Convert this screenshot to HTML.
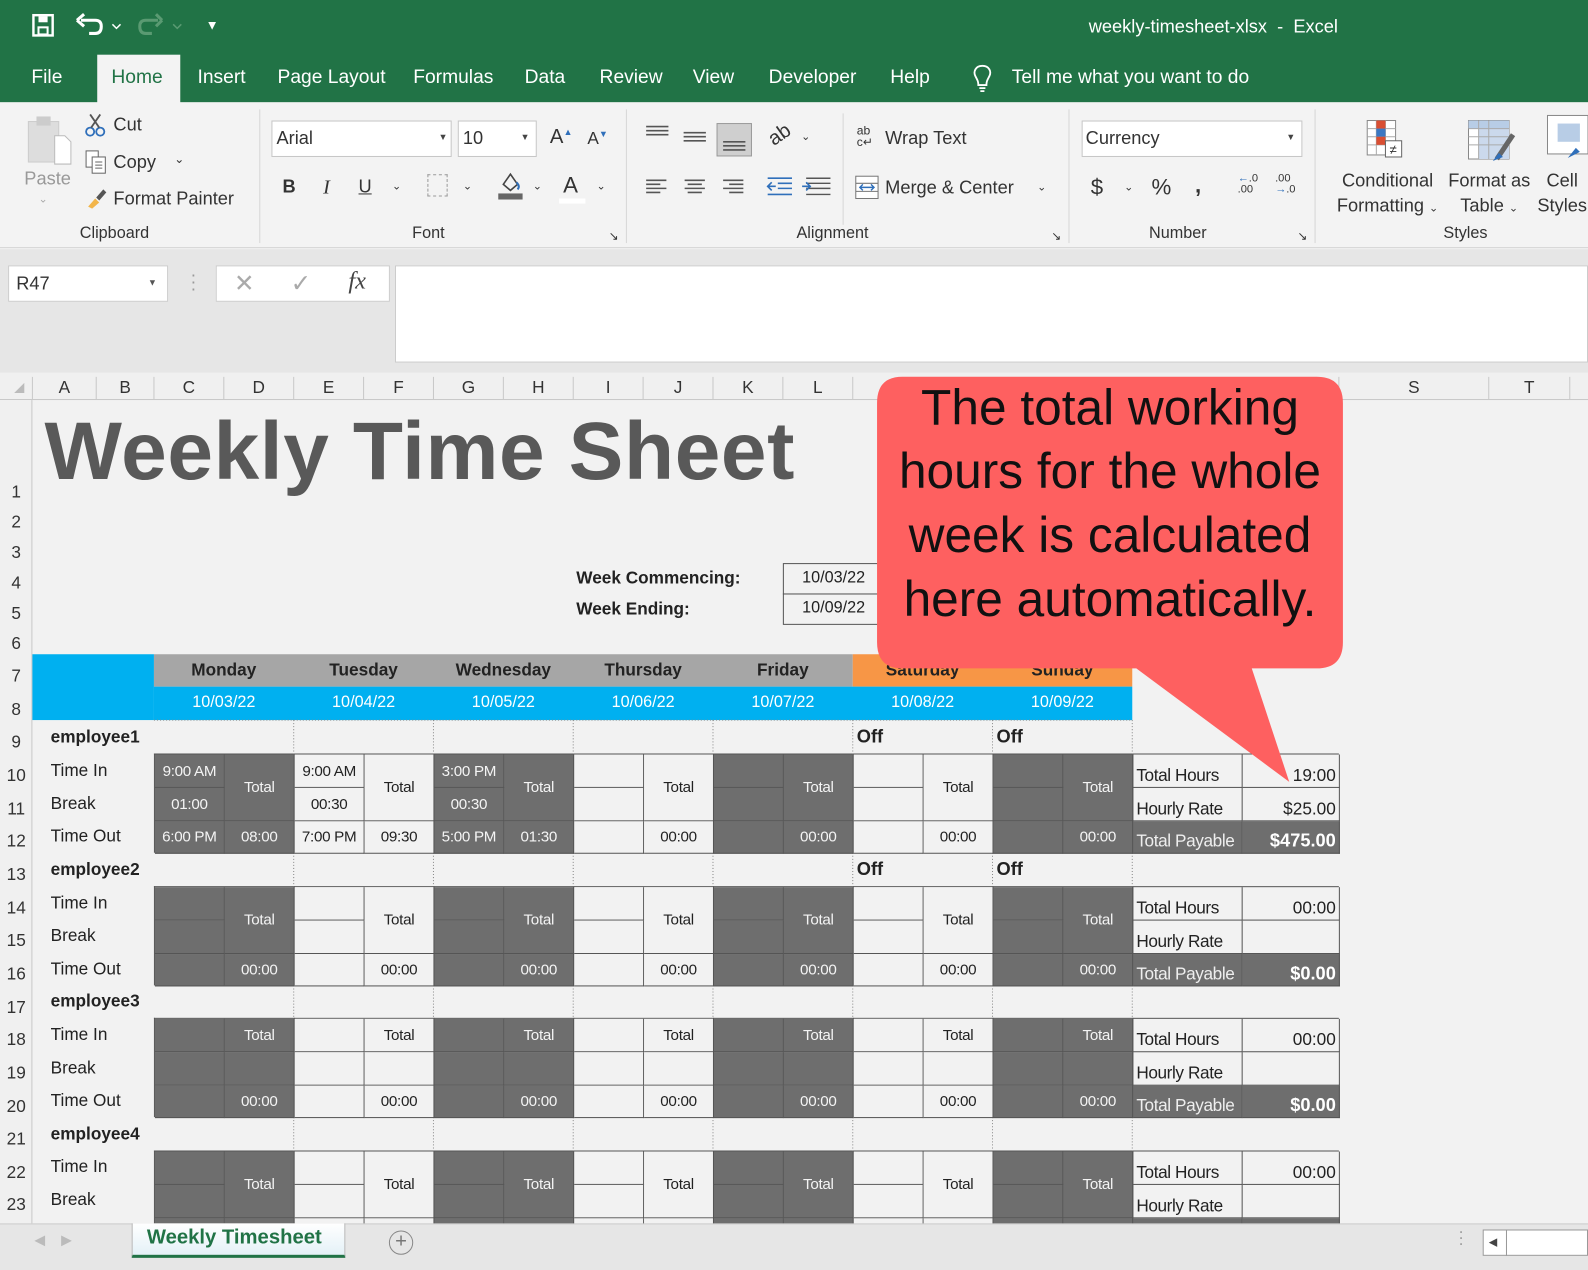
<!DOCTYPE html>
<html><head><meta charset="utf-8">
<style>
*{margin:0;padding:0;box-sizing:border-box}
html,body{width:1588px;height:1270px;overflow:hidden;background:#f2f2f2}
#w{position:absolute;left:0;top:0;width:1568px;height:1254px;transform:scale(1.01276);transform-origin:0 0;font-family:"Liberation Sans",sans-serif;color:#222;background:#f2f2f2;overflow:hidden}
.a{position:absolute;white-space:nowrap}
.day{position:absolute;width:138px;height:98px;border-left:1px solid #555;border-top:1px solid #555;font-size:15px;letter-spacing:-.3px}
.day div{position:absolute;border-right:1px solid #555;border-bottom:1px solid #555;display:flex;align-items:center;justify-content:center;white-space:nowrap}
.D div{background:#6e6e6e;color:#f4f4f4}
.L div{background:#f2f2f2;color:#222}
.a1{left:0;top:0;width:69px;height:33px}
.a2{left:0;top:33px;width:69px;height:33px}
.a3{left:0;top:66px;width:69px;height:32px}
.bT{left:69px;top:0;width:69px;height:66px}
.b1{left:69px;top:0;width:69px;height:33px}
.b2{left:69px;top:33px;width:69px;height:33px}
.b3{left:69px;top:66px;width:69px;height:32px}
.sum{position:absolute;left:1118px;width:204px;height:98px;border-left:1px solid #555;border-top:1px solid #555;font-size:17px}
.sum div{position:absolute;border-right:1px solid #555;border-bottom:1px solid #555;display:flex;align-items:flex-end;padding:0 3px 1px;white-space:nowrap;overflow:hidden}
.q{left:0;width:108px;letter-spacing:-.4px}.r{left:108px;width:96px;justify-content:flex-end}
.r1{top:0;height:33px}.r2{top:33px;height:33px}.r3{top:66px;height:32px;background:#6e6e6e;color:#eee}
.rn{position:absolute;left:0;width:32px;text-align:center;font-size:17px;color:#333}
.ch{position:absolute;top:373px;font-size:17px;color:#333;text-align:center}
.lbl{position:absolute;left:50px;font-size:17px}
.emp{position:absolute;left:50px;font-size:17px;font-weight:bold}
.rib{position:absolute;font-size:18px;color:#333;white-space:nowrap}
.gl{position:absolute;top:222px;font-size:16px;color:#333;transform:translateX(-50%)}
.sep{position:absolute;top:108px;height:132px;border-left:1px solid #d6d6d6}
</style></head><body><div id="w">
<div class="a" style="left:0;top:0;width:1568px;height:101px;background:#217346"></div>
<svg class="a" style="left:30px;top:12px" width="26" height="26" viewBox="0 0 26 26"><rect x="3" y="3" width="19" height="20" fill="none" stroke="#fff" stroke-width="2.4"/><rect x="8" y="4" width="9" height="6" fill="#fff"/><rect x="8" y="15" width="9" height="7" fill="none" stroke="#fff" stroke-width="2"/></svg>
<svg class="a" style="left:74px;top:12px" width="50" height="26" viewBox="0 0 50 26"><path d="M6 8 L20 8 Q26 8 26 14 Q26 21 20 21 L14 21" fill="none" stroke="#fff" stroke-width="3"/><path d="M2 8 L9 2 M2 8 L9 14" stroke="#fff" stroke-width="3" fill="none"/><path d="M37 12 l4 4 l4-4" fill="none" stroke="#fff" stroke-width="1.5"/></svg>
<svg class="a" style="left:134px;top:12px" width="50" height="26" viewBox="0 0 50 26"><path d="M22 8 L10 8 Q4 8 4 14 Q4 21 10 21 L16 21 M26 8 l-6-6 M26 8 l-6 6" fill="none" stroke="#5a9a72" stroke-width="3"/><path d="M37 12 l4 4 l4-4" fill="none" stroke="#5a9a72" stroke-width="1.5"/></svg>
<div class="a" style="left:203px;top:17px;color:#fff;font-size:13px">&#9660;</div>
<div class="a" style="left:1075px;top:16px;color:#fff;font-size:18px">weekly-timesheet-xlsx&nbsp; - &nbsp;Excel</div>
<div class="a" style="left:96px;top:54px;width:82px;height:48px;background:#f3f3f3"></div>
<div class="a" style="top:66px;left:0;font-size:19px;color:#fff;width:1568px;height:30px">
<span class="a" style="left:31px">File</span><span class="a" style="left:110px;color:#217346">Home</span><span class="a" style="left:195px">Insert</span><span class="a" style="left:274px">Page Layout</span><span class="a" style="left:408px">Formulas</span><span class="a" style="left:518px">Data</span><span class="a" style="left:592px">Review</span><span class="a" style="left:684px">View</span><span class="a" style="left:759px">Developer</span><span class="a" style="left:879px">Help</span><span class="a" style="left:999px">Tell me what you want to do</span></div>
<svg class="a" style="left:958px;top:63px" width="24" height="30" viewBox="0 0 24 30"><path d="M12 2 C5 2 3 8 5 12 C7 16 8 17 8 21 L16 21 C16 17 17 16 19 12 C21 8 19 2 12 2Z M9 24 L15 24 M10 27 L14 27" fill="none" stroke="#fff" stroke-width="1.8"/></svg>
<div class="a" style="left:0;top:101px;width:1568px;height:144px;background:#f3f3f3;border-bottom:1px solid #d5d5d5"></div>
<svg class="a" style="left:24px;top:112px" width="48" height="52" viewBox="0 0 48 52"><rect x="4" y="8" width="30" height="40" fill="#ddd" stroke="#ccc"/><rect x="12" y="3" width="14" height="9" fill="#ccc"/><path d="M30 22 L40 22 L46 28 L46 50 L30 50Z" fill="#fff" stroke="#bbb"/></svg>
<div class="rib" style="left:24px;top:166px;color:#999">Paste</div>
<div class="rib" style="left:38px;top:190px;color:#aaa;font-size:11px">&#8964;</div>
<svg class="a" style="left:83px;top:111px" width="22" height="24" viewBox="0 0 22 24"><circle cx="6" cy="19" r="4" fill="none" stroke="#2f6fba" stroke-width="1.8"/><circle cx="16" cy="19" r="4" fill="none" stroke="#2f6fba" stroke-width="1.8"/><path d="M7 15 L16 2 M15 15 L6 2" stroke="#555" stroke-width="1.8"/></svg>
<div class="rib" style="left:112px;top:113px">Cut</div>
<svg class="a" style="left:83px;top:147px" width="24" height="26" viewBox="0 0 24 26"><rect x="2" y="2" width="12" height="16" fill="#fff" stroke="#666"/><rect x="8" y="8" width="13" height="16" fill="#fff" stroke="#666"/><path d="M11 13h7M11 16h7M11 19h7" stroke="#666"/></svg>
<div class="rib" style="left:112px;top:150px">Copy</div>
<div class="rib" style="left:172px;top:150px;font-size:12px">&#8964;</div>
<svg class="a" style="left:84px;top:184px" width="24" height="24" viewBox="0 0 24 24"><path d="M3 20 L10 12 L14 16 L7 22Z" fill="#f2b54a"/><path d="M11 11 L18 3 L21 6 L14 14Z" fill="#555"/></svg>
<div class="rib" style="left:112px;top:186px">Format Painter</div>
<div class="gl" style="left:113px">Clipboard</div>
<div class="sep" style="left:256px"></div>
<div class="a" style="left:268px;top:119px;width:178px;height:36px;background:#fff;border:1px solid #c6c6c6"></div>
<div class="rib" style="left:273px;top:126px">Arial</div><div class="a" style="left:433px;top:130px;font-size:9px;color:#444">&#9660;</div>
<div class="a" style="left:452px;top:119px;width:78px;height:36px;background:#fff;border:1px solid #c6c6c6"></div>
<div class="rib" style="left:457px;top:126px">10</div><div class="a" style="left:514px;top:130px;font-size:9px;color:#444">&#9660;</div>
<div class="rib" style="left:543px;top:124px;font-size:20px">A<sup style="font-size:9px;color:#2f6fba">&#9650;</sup></div>
<div class="rib" style="left:580px;top:127px;font-size:17px">A<sup style="font-size:9px;color:#2f6fba">&#9660;</sup></div>
<div class="rib" style="left:279px;top:174px;font-weight:bold">B</div>
<div class="rib" style="left:319px;top:174px;font-style:italic;font-family:'Liberation Serif',serif;font-size:20px">I</div>
<div class="rib" style="left:354px;top:174px;text-decoration:underline">U</div>
<div class="rib" style="left:387px;top:177px;font-size:11px">&#8964;</div>
<div class="a" style="left:422px;top:172px;width:20px;height:22px;border:1px dashed #999"></div>
<div class="rib" style="left:457px;top:177px;font-size:11px">&#8964;</div>
<svg class="a" style="left:491px;top:168px" width="26" height="30" viewBox="0 0 26 30"><path d="M6 14 L13 4 L20 14 L13 20Z" fill="none" stroke="#444" stroke-width="1.6"/><path d="M19 12 q4 4 1 7" stroke="#2f6fba" stroke-width="2" fill="none"/><rect x="1" y="23" width="24" height="6" fill="#666"/></svg>
<div class="rib" style="left:526px;top:177px;font-size:11px">&#8964;</div>
<div class="rib" style="left:556px;top:170px;font-size:22px">A</div><div class="a" style="left:552px;top:196px;width:26px;height:5px;background:#fff"></div>
<div class="rib" style="left:589px;top:177px;font-size:11px">&#8964;</div>
<div class="gl" style="left:423px">Font</div>
<div class="gl" style="left:606px;font-size:12px;top:226px">&#8600;</div>
<div class="sep" style="left:618px"></div>
<svg class="a" style="left:636px;top:120px" width="110" height="36" viewBox="0 0 110 36"><path d="M2 5h22M2 9h22M2 13h22M39 11h22M39 15h22M39 19h22" stroke="#555" stroke-width="1.6"/><rect x="72" y="2" width="34" height="32" fill="#cfcfcf" stroke="#999"/><path d="M78 20h22M78 24h22M78 28h22" stroke="#555" stroke-width="1.6"/></svg>
<div class="rib" style="left:759px;top:122px;font-size:20px;transform:rotate(-35deg)">ab</div><div class="rib" style="left:791px;top:128px;font-size:11px">&#8964;</div>
<svg class="a" style="left:636px;top:172px" width="190" height="26" viewBox="0 0 190 26"><path d="M2 6h20M2 10h14M2 14h20M2 18h14M40 6h20M43 10h14M40 14h20M43 18h14M78 6h20M84 10h14M78 14h20M84 18h14" stroke="#555" stroke-width="1.6"/><path d="M122 4h24M132 9h14M132 14h14M122 20h24M130 12l-8-0M126 8l-4 4l4 4" stroke="#2f6fba" stroke-width="1.6" fill="none"/><path d="M160 4h24M160 9h24M160 14h24M160 20h24" stroke="#555" stroke-width="1.4"/><path d="M156 12h8M160 8l4 4l-4 4" stroke="#2f6fba" stroke-width="1.6" fill="none"/></svg>
<div class="sep" style="left:832px;height:110px;top:112px"></div>
<div class="rib" style="left:846px;top:124px;font-size:12px;line-height:11px">ab<br>c&#8629;</div>
<div class="rib" style="left:874px;top:126px">Wrap Text</div>
<svg class="a" style="left:844px;top:172px" width="24" height="26" viewBox="0 0 24 26"><rect x="1" y="2" width="22" height="22" fill="#fff" stroke="#777"/><path d="M1 9h22M1 17h22" stroke="#777"/><path d="M5 13h14M8 10l-3 3l3 3M16 10l3 3l-3 3" stroke="#2f6fba" stroke-width="1.4" fill="none"/></svg>
<div class="rib" style="left:874px;top:175px">Merge &amp; Center</div><div class="rib" style="left:1024px;top:178px;font-size:11px">&#8964;</div>
<div class="gl" style="left:822px">Alignment</div>
<div class="gl" style="left:1043px;font-size:12px;top:226px">&#8600;</div>
<div class="sep" style="left:1055px"></div>
<div class="a" style="left:1068px;top:119px;width:218px;height:36px;background:#fff;border:1px solid #c6c6c6"></div>
<div class="rib" style="left:1072px;top:126px">Currency</div><div class="a" style="left:1270px;top:130px;font-size:9px;color:#444">&#9660;</div>
<div class="rib" style="left:1077px;top:172px;font-size:22px">$</div><div class="rib" style="left:1110px;top:178px;font-size:11px">&#8964;</div>
<div class="rib" style="left:1137px;top:172px;font-size:22px">%</div>
<div class="rib" style="left:1180px;top:170px;font-size:22px;font-weight:bold">,</div>
<div class="rib" style="left:1222px;top:171px;font-size:11px;line-height:11px"><span style="color:#2f6fba">&#8592;</span>.0<br>.00</div>
<div class="rib" style="left:1259px;top:171px;font-size:11px;line-height:11px">.00<br><span style="color:#2f6fba">&#8594;</span>.0</div>
<div class="gl" style="left:1163px">Number</div>
<div class="gl" style="left:1286px;font-size:12px;top:226px">&#8600;</div>
<div class="sep" style="left:1298px"></div>
<svg class="a" style="left:1348px;top:117px" width="48" height="46" viewBox="0 0 48 46"><rect x="2" y="2" width="28" height="34" fill="#fff" stroke="#888"/><path d="M2 10h28M2 18h28M2 26h28M11 2v34M20 2v34" stroke="#aaa"/><rect x="11" y="2" width="9" height="8" fill="#d94f33"/><rect x="11" y="10" width="9" height="8" fill="#3c78c3"/><rect x="11" y="18" width="9" height="8" fill="#d94f33"/><rect x="20" y="22" width="16" height="16" fill="#fff" stroke="#666"/><text x="24" y="35" font-size="13" fill="#333" font-family="Liberation Sans">≠</text></svg>
<svg class="a" style="left:1448px;top:115px" width="50" height="48" viewBox="0 0 50 48"><rect x="2" y="4" width="40" height="38" fill="#fff" stroke="#888"/><rect x="2" y="4" width="40" height="8" fill="#b8cde6"/><rect x="12" y="12" width="30" height="30" fill="#cbd9ec"/><path d="M2 12h40M2 20h40M2 28h40M12 4v38M22 4v38" stroke="#aaa"/><path d="M30 42 L46 18" stroke="#666" stroke-width="5"/><path d="M26 44 l6-8 l4 4z" fill="#2f6fba"/></svg>
<svg class="a" style="left:1526px;top:112px" width="42" height="50" viewBox="0 0 42 50"><rect x="2" y="2" width="40" height="38" fill="#fff" stroke="#888"/><rect x="12" y="10" width="22" height="18" fill="#b8cde6"/><path d="M22 44 l8-10 l4 4z" fill="#2f6fba"/></svg>
<div class="rib" style="left:1320px;top:166px;line-height:25px;text-align:center">Conditional<br>Formatting <span style="font-size:11px">&#8964;</span></div>
<div class="rib" style="left:1430px;top:166px;line-height:25px;text-align:center">Format as<br>Table <span style="font-size:11px">&#8964;</span></div>
<div class="rib" style="left:1518px;top:166px;line-height:25px;text-align:center">Cell<br>Styles</div>
<div class="gl" style="left:1447px">Styles</div>
<div class="a" style="left:0;top:246px;width:1568px;height:122px;background:#e6e6e6"></div>
<div class="a" style="left:8px;top:262px;width:158px;height:36px;background:#fff;border:1px solid #ccc"></div>
<div class="rib" style="left:16px;top:270px">R47</div><div class="a" style="left:146px;top:274px;font-size:9px;color:#555">&#9660;</div>
<div class="a" style="left:188px;top:268px;color:#999;font-size:18px;line-height:7px">·<br>·<br>·</div>
<div class="a" style="left:213px;top:262px;width:172px;height:36px;background:#fff;border:1px solid #ccc"></div>
<div class="rib" style="left:231px;top:266px;color:#aaa;font-size:24px">&#10005;</div>
<div class="rib" style="left:287px;top:266px;color:#aaa;font-size:24px">&#10003;</div>
<div class="rib" style="left:344px;top:265px;font-family:'Liberation Serif',serif;font-style:italic;font-size:24px;color:#444">fx</div>
<div class="a" style="left:390px;top:262px;width:1178px;height:96px;background:#fff;border:1px solid #ccc"></div>
<div class="a" style="left:0;top:368px;width:1568px;height:27px;background:#f0f0f0;border-bottom:1px solid #c8c8c8"></div>
<div class="a" style="left:14px;top:378px;border-right:10px solid #bbb;border-top:10px solid transparent;width:0;height:0"></div>
<div class="ch" style="left:32px;width:63px">A</div><div class="ch" style="left:95px;width:57px">B</div><div class="ch" style="left:152px;width:69px">C</div><div class="ch" style="left:221px;width:69px">D</div><div class="ch" style="left:290px;width:69px">E</div><div class="ch" style="left:359px;width:69px">F</div><div class="ch" style="left:428px;width:69px">G</div><div class="ch" style="left:497px;width:69px">H</div><div class="ch" style="left:566px;width:69px">I</div><div class="ch" style="left:635px;width:69px">J</div><div class="ch" style="left:704px;width:69px">K</div><div class="ch" style="left:773px;width:69px">L</div><div class="ch" style="left:1322px;width:148px">S</div><div class="ch" style="left:1470px;width:80px">T</div>
<svg class="a" style="left:0;top:372px" width="1568" height="22"><g stroke="#c8c8c8"><line x1="32" y1="0" x2="32" y2="22"/><line x1="95" y1="0" x2="95" y2="22"/><line x1="152" y1="0" x2="152" y2="22"/><line x1="221" y1="0" x2="221" y2="22"/><line x1="290" y1="0" x2="290" y2="22"/><line x1="359" y1="0" x2="359" y2="22"/><line x1="428" y1="0" x2="428" y2="22"/><line x1="497" y1="0" x2="497" y2="22"/><line x1="566" y1="0" x2="566" y2="22"/><line x1="635" y1="0" x2="635" y2="22"/><line x1="704" y1="0" x2="704" y2="22"/><line x1="773" y1="0" x2="773" y2="22"/><line x1="842" y1="0" x2="842" y2="22"/><line x1="1322" y1="0" x2="1322" y2="22"/><line x1="1470" y1="0" x2="1470" y2="22"/><line x1="1550" y1="0" x2="1550" y2="22"/></g></svg>
<div class="a" style="left:0;top:395px;width:32px;height:813px;background:#f0f0f0;border-right:1px solid #c8c8c8"></div>
<div class="rn" style="top:476px">1</div><div class="rn" style="top:506px">2</div><div class="rn" style="top:536px">3</div><div class="rn" style="top:566px">4</div><div class="rn" style="top:596px">5</div><div class="rn" style="top:626px">6</div><div class="rn" style="top:658px">7</div><div class="rn" style="top:691px">8</div><div class="rn" style="top:723px">9</div><div class="rn" style="top:756px">10</div><div class="rn" style="top:789px">11</div><div class="rn" style="top:821px">12</div><div class="rn" style="top:854px">13</div><div class="rn" style="top:887px">14</div><div class="rn" style="top:919px">15</div><div class="rn" style="top:952px">16</div><div class="rn" style="top:985px">17</div><div class="rn" style="top:1017px">18</div><div class="rn" style="top:1050px">19</div><div class="rn" style="top:1083px">20</div><div class="rn" style="top:1115px">21</div><div class="rn" style="top:1148px">22</div><div class="rn" style="top:1180px">23</div>
<div class="a" style="left:44px;top:400px;font-size:81px;font-weight:bold;color:#595959;letter-spacing:.6px">Weekly Time Sheet</div>
<div class="a" style="left:569px;top:561px;font-size:17px;font-weight:bold">Week Commencing:</div>
<div class="a" style="left:569px;top:592px;font-size:17px;font-weight:bold">Week Ending:</div>
<div class="a" style="left:773px;top:556px;width:100px;height:31px;border:1px solid #555;font-size:16px;padding:5px 0 0 18px">10/03/22</div>
<div class="a" style="left:773px;top:586px;width:100px;height:31px;border:1px solid #555;font-size:16px;padding:5px 0 0 18px">10/09/22</div>
<div class="a" style="left:32px;top:646px;width:120px;height:65px;background:#00b0f0"></div>
<div class="a" style="left:152px;top:646px;width:690px;height:32px;background:#a6a6a6"></div>
<div class="a" style="left:842px;top:646px;width:276px;height:32px;background:#f79646"></div>
<div class="a" style="left:152px;top:678px;width:966px;height:33px;background:#00b0f0"></div>
<div class="a" style="top:652px;left:152px;width:966px;font-size:17px;font-weight:bold;color:#222;display:flex">
<span style="width:138px;text-align:center">Monday</span><span style="width:138px;text-align:center">Tuesday</span><span style="width:138px;text-align:center">Wednesday</span><span style="width:138px;text-align:center">Thursday</span><span style="width:138px;text-align:center">Friday</span><span style="width:138px;text-align:center">Saturday</span><span style="width:138px;text-align:center">Sunday</span></div>
<div class="a" style="top:685px;left:152px;width:966px;font-size:16px;color:#fff;display:flex">
<span style="width:138px;text-align:center">10/03/22</span><span style="width:138px;text-align:center">10/04/22</span><span style="width:138px;text-align:center">10/05/22</span><span style="width:138px;text-align:center">10/06/22</span><span style="width:138px;text-align:center">10/07/22</span><span style="width:138px;text-align:center">10/08/22</span><span style="width:138px;text-align:center">10/09/22</span></div>
<svg class="a" style="left:0;top:0" width="1568" height="1210"><g stroke="#888" stroke-dasharray="1,2"><path d="M290 711v33M428 711v33M566 711v33M704 711v33M842 711v33M980 711v33M1118 711v33M290 842v33M428 842v33M566 842v33M704 842v33M842 842v33M980 842v33M1118 842v33M290 973v32M428 973v32M566 973v32M704 973v32M842 973v32M980 973v32M1118 973v32M290 1103v33M428 1103v33M566 1103v33M704 1103v33M842 1103v33M980 1103v33M1118 1103v33M152 711h966"/></g></svg>
<div class="emp" style="top:718px">employee1</div><div class="lbl" style="top:751px">Time In</div><div class="lbl" style="top:784px">Break</div><div class="lbl" style="top:816px">Time Out</div>
<div class="emp" style="top:849px">employee2</div><div class="lbl" style="top:882px">Time In</div><div class="lbl" style="top:914px">Break</div><div class="lbl" style="top:947px">Time Out</div>
<div class="emp" style="top:979px">employee3</div><div class="lbl" style="top:1012px">Time In</div><div class="lbl" style="top:1045px">Break</div><div class="lbl" style="top:1077px">Time Out</div>
<div class="emp" style="top:1110px">employee4</div><div class="lbl" style="top:1142px">Time In</div><div class="lbl" style="top:1175px">Break</div>
<div class="a" style="left:846px;top:717px;font-size:18px;font-weight:bold">Off</div><div class="a" style="left:984px;top:717px;font-size:18px;font-weight:bold">Off</div>
<div class="a" style="left:846px;top:848px;font-size:18px;font-weight:bold">Off</div><div class="a" style="left:984px;top:848px;font-size:18px;font-weight:bold">Off</div>
<div class="day D" style="left:152px;top:744px"><div class="a1">9:00 AM</div><div class="a2">01:00</div><div class="a3">6:00 PM</div><div class="bT">Total</div><div class="b3">08:00</div></div>
<div class="day L" style="left:290px;top:744px"><div class="a1">9:00 AM</div><div class="a2">00:30</div><div class="a3">7:00 PM</div><div class="bT">Total</div><div class="b3">09:30</div></div>
<div class="day D" style="left:428px;top:744px"><div class="a1">3:00 PM</div><div class="a2">00:30</div><div class="a3">5:00 PM</div><div class="bT">Total</div><div class="b3">01:30</div></div>
<div class="day L" style="left:566px;top:744px"><div class="a1"></div><div class="a2"></div><div class="a3"></div><div class="bT">Total</div><div class="b3">00:00</div></div>
<div class="day D" style="left:704px;top:744px"><div class="a1"></div><div class="a2"></div><div class="a3"></div><div class="bT">Total</div><div class="b3">00:00</div></div>
<div class="day L" style="left:842px;top:744px"><div class="a1"></div><div class="a2"></div><div class="a3"></div><div class="bT">Total</div><div class="b3">00:00</div></div>
<div class="day D" style="left:980px;top:744px"><div class="a1"></div><div class="a2"></div><div class="a3"></div><div class="bT">Total</div><div class="b3">00:00</div></div>
<div class="sum" style="top:744px"><div class="q r1">Total Hours</div><div class="r r1">19:00</div><div class="q r2">Hourly Rate</div><div class="r r2">$25.00</div><div class="q r3">Total Payable</div><div class="r r3" style="font-weight:bold;font-size:18px;color:#fff">$475.00</div></div>
<div class="day D" style="left:152px;top:875px"><div class="a1"></div><div class="a2"></div><div class="a3"></div><div class="bT">Total</div><div class="b3">00:00</div></div>
<div class="day L" style="left:290px;top:875px"><div class="a1"></div><div class="a2"></div><div class="a3"></div><div class="bT">Total</div><div class="b3">00:00</div></div>
<div class="day D" style="left:428px;top:875px"><div class="a1"></div><div class="a2"></div><div class="a3"></div><div class="bT">Total</div><div class="b3">00:00</div></div>
<div class="day L" style="left:566px;top:875px"><div class="a1"></div><div class="a2"></div><div class="a3"></div><div class="bT">Total</div><div class="b3">00:00</div></div>
<div class="day D" style="left:704px;top:875px"><div class="a1"></div><div class="a2"></div><div class="a3"></div><div class="bT">Total</div><div class="b3">00:00</div></div>
<div class="day L" style="left:842px;top:875px"><div class="a1"></div><div class="a2"></div><div class="a3"></div><div class="bT">Total</div><div class="b3">00:00</div></div>
<div class="day D" style="left:980px;top:875px"><div class="a1"></div><div class="a2"></div><div class="a3"></div><div class="bT">Total</div><div class="b3">00:00</div></div>
<div class="sum" style="top:875px"><div class="q r1">Total Hours</div><div class="r r1">00:00</div><div class="q r2">Hourly Rate</div><div class="r r2"></div><div class="q r3">Total Payable</div><div class="r r3" style="font-weight:bold;font-size:18px;color:#fff">$0.00</div></div>
<div class="day D" style="left:152px;top:1005px"><div class="a1"></div><div class="a2"></div><div class="a3"></div><div class="b1">Total</div><div class="b2"></div><div class="b3">00:00</div></div>
<div class="day L" style="left:290px;top:1005px"><div class="a1"></div><div class="a2"></div><div class="a3"></div><div class="b1">Total</div><div class="b2"></div><div class="b3">00:00</div></div>
<div class="day D" style="left:428px;top:1005px"><div class="a1"></div><div class="a2"></div><div class="a3"></div><div class="b1">Total</div><div class="b2"></div><div class="b3">00:00</div></div>
<div class="day L" style="left:566px;top:1005px"><div class="a1"></div><div class="a2"></div><div class="a3"></div><div class="b1">Total</div><div class="b2"></div><div class="b3">00:00</div></div>
<div class="day D" style="left:704px;top:1005px"><div class="a1"></div><div class="a2"></div><div class="a3"></div><div class="b1">Total</div><div class="b2"></div><div class="b3">00:00</div></div>
<div class="day L" style="left:842px;top:1005px"><div class="a1"></div><div class="a2"></div><div class="a3"></div><div class="b1">Total</div><div class="b2"></div><div class="b3">00:00</div></div>
<div class="day D" style="left:980px;top:1005px"><div class="a1"></div><div class="a2"></div><div class="a3"></div><div class="b1">Total</div><div class="b2"></div><div class="b3">00:00</div></div>
<div class="sum" style="top:1005px"><div class="q r1">Total Hours</div><div class="r r1">00:00</div><div class="q r2">Hourly Rate</div><div class="r r2"></div><div class="q r3">Total Payable</div><div class="r r3" style="font-weight:bold;font-size:18px;color:#fff">$0.00</div></div>
<div class="day D" style="left:152px;top:1136px"><div class="a1"></div><div class="a2"></div><div class="a3"></div><div class="bT">Total</div><div class="b3"></div></div>
<div class="day L" style="left:290px;top:1136px"><div class="a1"></div><div class="a2"></div><div class="a3"></div><div class="bT">Total</div><div class="b3"></div></div>
<div class="day D" style="left:428px;top:1136px"><div class="a1"></div><div class="a2"></div><div class="a3"></div><div class="bT">Total</div><div class="b3"></div></div>
<div class="day L" style="left:566px;top:1136px"><div class="a1"></div><div class="a2"></div><div class="a3"></div><div class="bT">Total</div><div class="b3"></div></div>
<div class="day D" style="left:704px;top:1136px"><div class="a1"></div><div class="a2"></div><div class="a3"></div><div class="bT">Total</div><div class="b3"></div></div>
<div class="day L" style="left:842px;top:1136px"><div class="a1"></div><div class="a2"></div><div class="a3"></div><div class="bT">Total</div><div class="b3"></div></div>
<div class="day D" style="left:980px;top:1136px"><div class="a1"></div><div class="a2"></div><div class="a3"></div><div class="bT">Total</div><div class="b3"></div></div>
<div class="sum" style="top:1136px"><div class="q r1">Total Hours</div><div class="r r1">00:00</div><div class="q r2">Hourly Rate</div><div class="r r2"></div><div class="q r3"></div><div class="r r3"></div></div>
<svg class="a" style="left:860px;top:368px" width="480" height="410" viewBox="0 0 480 410"><path d="M31 4 H440 Q466 4 466 30 V266 Q466 292 440 292 H376 L413 404 L262 292 H31 Q6 292 6 266 V30 Q6 4 31 4Z" fill="#fe6060"/></svg>
<div class="a" style="left:866px;top:372px;width:460px;text-align:center;font-size:49px;line-height:63px;color:#111">The total working<br>hours for the whole<br>week is calculated<br>here automatically.</div>
<div class="a" style="left:0;top:1208px;width:1568px;height:46px;background:#e6e6e6;border-top:1px solid #ccc"></div>
<div class="a" style="left:34px;top:1216px;color:#bbb;font-size:14px">&#9664;&nbsp;&nbsp;&nbsp;&nbsp;&#9654;</div>
<div class="a" style="left:130px;top:1208px;width:211px;height:34px;background:linear-gradient(#fff,#e4f1f7);border-bottom:3px solid #217346;border-left:1px solid #bbb;border-right:1px solid #bbb"></div>
<div class="a" style="left:145px;top:1211px;font-size:20px;font-weight:bold;color:#217346">Weekly Timesheet</div>
<div class="a" style="left:384px;top:1215px;width:24px;height:24px;border:1.5px solid #888;border-radius:50%;text-align:center;font-size:20px;line-height:21px;color:#777">+</div>
<div class="a" style="left:1440px;top:1214px;color:#999;font-size:16px;line-height:6px">·<br>·<br>·</div>
<div class="a" style="left:1464px;top:1214px;width:104px;height:26px;background:#fff;border:1px solid #999"></div>
<div class="a" style="left:1464px;top:1214px;width:24px;height:26px;border-right:1px solid #999;font-size:11px;padding:6px 0 0 6px;color:#444">&#9664;</div>
</div></body></html>
